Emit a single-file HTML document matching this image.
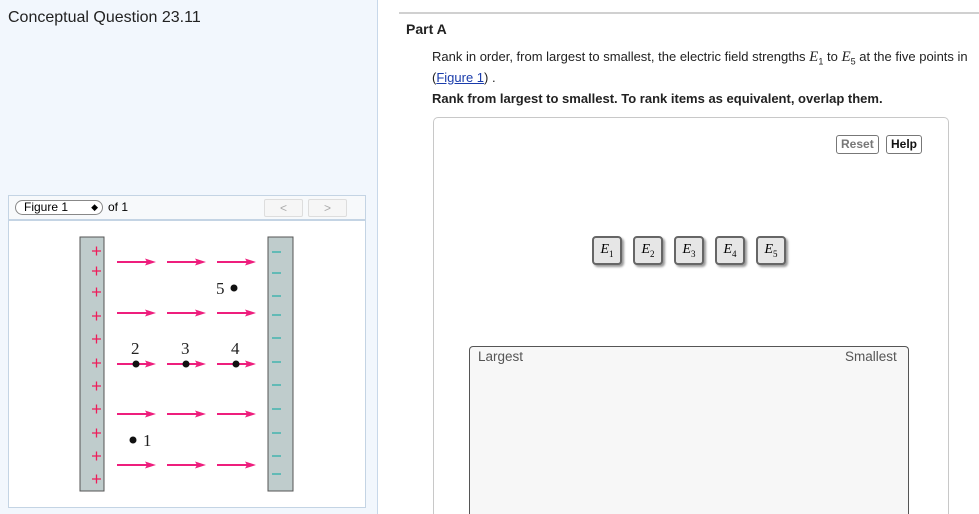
<!DOCTYPE html>
<html><head><style>
*{margin:0;padding:0;box-sizing:border-box}
html,body{width:979px;height:514px;overflow:hidden}
body{background:#fff;font-family:"Liberation Sans",Arial,sans-serif;position:relative}
.left{position:absolute;left:0;top:0;width:378px;height:514px;background:#f2f7fd;border-right:1px solid #c8d8ea;overflow:hidden}
.t{position:absolute;left:8px;top:9px;font-size:16px;color:#222}
.tb{position:absolute;left:8px;top:195px;width:358px;height:25px;border:1px solid #c4d4e4;background:#f7f9fb}
.sel{position:absolute;left:6px;top:4px;width:88px;height:15px;border:1px solid #888;border-radius:8px;background:#fff;font-size:12px;padding-left:8px;line-height:13px}
.nav{position:absolute;top:3px;width:39px;height:18px;border:1px solid #ddd;border-radius:2px;background:#f6f6f6;color:#aaa;font-size:12px;text-align:center;line-height:16px}
.fig{position:absolute;left:8px;top:220px;width:358px;height:288px;border:1px solid #c4d4e4;background:#fff}
.abs{position:absolute}
.btn{position:absolute;height:19px;border:1px solid #777;border-radius:3px;background:#fff;font-size:12px;font-weight:bold;line-height:17px;padding:0 4px}
.e{position:absolute;top:236px;width:30px;height:29px;border:2px solid #666;border-radius:4px;background:#e6e6e6;box-shadow:2px 2px 2px #999;font-family:"Liberation Serif",serif;font-style:italic;font-size:14px;text-align:center;line-height:24px}
.e sub{font-style:normal;font-size:9px}
</style></head><body>
<div class="left">
<div class="t">Conceptual Question 23.11</div>
<div class="tb"><div class="sel">Figure 1<span style="position:absolute;right:4px;top:0;font-size:9px">&#9670;</span></div><span class="abs" style="left:99px;top:4px;font-size:12px">of 1</span>
<div class="nav" style="left:255px">&lt;</div><div class="nav" style="left:299px">&gt;</div></div>
<div class="fig"></div>
<svg class="abs" style="left:0;top:0" width="378" height="514">
<defs><g id="ar"><path d="M0,0h30" stroke="#ee1e7d" stroke-width="2"/><path d="M28,-3.5 L39,0 L28,3.5 L30,0Z" fill="#ee1e7d"/></g>
<g id="row"><use href="#ar" x="117"/><use href="#ar" x="167"/><use href="#ar" x="217"/></g></defs>
<rect x="80" y="237" width="24" height="254" fill="#bfcccc" stroke="#555"/>
<rect x="268" y="237" width="25" height="254" fill="#bfcccc" stroke="#555"/>
<g stroke="#ee1c5a" stroke-width="1.3">
<path d="M92,251h9M96.5,246.5v9M92,271h9M96.5,266.5v9M92,292h9M96.5,287.5v9M92,316h9M96.5,311.5v9M92,339h9M96.5,334.5v9M92,363h9M96.5,358.5v9M92,386h9M96.5,381.5v9M92,409h9M96.5,404.5v9M92,433h9M96.5,428.5v9M92,456h9M96.5,451.5v9M92,479h9M96.5,474.5v9"/></g>
<g stroke="#2bb0a8" stroke-width="1.3"><path d="M272,252h9M272,273h9M272,296h9M272,315h9M272,338h9M272,362h9M272,385h9M272,409h9M272,433h9M272,456h9M272,474h9"/></g>
<use href="#row" y="262"/><use href="#row" y="313"/><use href="#row" y="364"/><use href="#row" y="414"/><use href="#row" y="465"/>
<g fill="#111"><circle cx="234" cy="288" r="3.5"/><circle cx="136" cy="364" r="3.5"/><circle cx="186" cy="364" r="3.5"/><circle cx="236" cy="364" r="3.5"/><circle cx="133" cy="440" r="3.5"/></g>
<g font-family="Liberation Serif,serif" font-size="17" fill="#222"><text x="216" y="294">5</text><text x="131" y="354">2</text><text x="181" y="354">3</text><text x="231" y="354">4</text><text x="143" y="446">1</text></g>
</svg>
</div>
<div class="abs" style="left:399px;top:12px;width:580px;height:2px;background:#d0d0d0"></div>
<div class="abs" style="left:406px;top:21px;font-size:14px;font-weight:bold;color:#222">Part A</div>
<div class="abs" style="left:432px;top:49px;font-size:13px;color:#222;line-height:16px;white-space:nowrap">Rank in order, from largest to smallest, the electric field strengths <i style="font-family:'Liberation Serif',serif;font-size:15px">E</i><sub style="font-size:9px">1</sub> to <i style="font-family:'Liberation Serif',serif;font-size:15px">E</i><sub style="font-size:9px">5</sub> at the five points in<br>(<span style="color:#1a3cab;text-decoration:underline">Figure 1</span>) .</div>
<div class="abs" style="left:432px;top:91px;font-size:13px;font-weight:bold;color:#222">Rank from largest to smallest. To rank items as equivalent, overlap them.</div>
<div class="abs" style="left:433px;top:117px;width:516px;height:397px;border:1px solid #c8c8c8;border-bottom:none;border-radius:5px 5px 0 0"></div>
<div class="btn" style="left:836px;top:135px;color:#777">Reset</div>
<div class="btn" style="left:886px;top:135px;color:#111">Help</div>
<div class="e" style="left:592px">E<sub>1</sub></div>
<div class="e" style="left:633px">E<sub>2</sub></div>
<div class="e" style="left:674px">E<sub>3</sub></div>
<div class="e" style="left:715px">E<sub>4</sub></div>
<div class="e" style="left:756px">E<sub>5</sub></div>
<div class="abs" style="left:469px;top:346px;width:440px;height:168px;border:1.5px solid #555;border-bottom:none;border-radius:4px 4px 0 0;background:#f7f7f7"></div>
<div class="abs" style="left:478px;top:349px;font-size:13.5px;color:#555">Largest</div>
<div class="abs" style="left:845px;top:349px;font-size:13.5px;color:#555">Smallest</div>
</body></html>
